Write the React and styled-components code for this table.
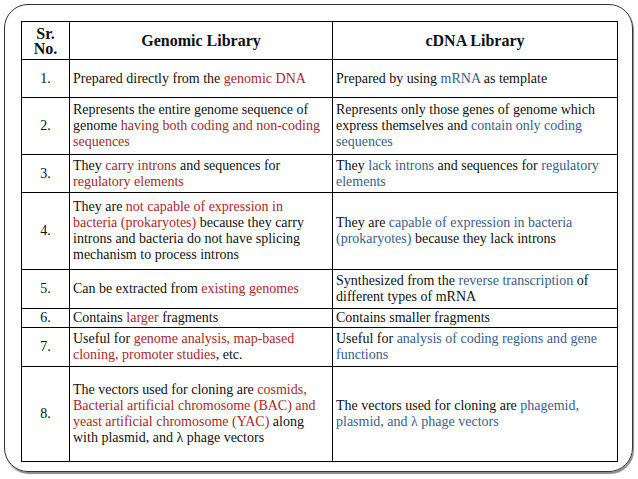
import React from 'react'
import styled, { createGlobalStyle } from 'styled-components'

const serif = `'Liberation Serif', 'Times New Roman', serif`

const GlobalStyle = createGlobalStyle`
  html, body {
    margin: 0;
    padding: 0;
    background: #fff;
    font-family: ${serif};
  }
`

const rows = [
  {
    no: '1.',
    h: 38,
    genomic: <>Prepared directly from the <Red>genomic DNA</Red></>,
    cdna: <>Prepared by using <Blue>mRNA</Blue> as template</>,
  },
  {
    no: '2.',
    h: 57,
    genomic: <>Represents the entire genome sequence of genome <Red>having both coding and non-coding sequences</Red></>,
    cdna: <>Represents only those genes of genome which express themselves and <Blue>contain only coding sequences</Blue></>,
  },
  {
    no: '3.',
    h: 38,
    genomic: <>They <Red>carry introns</Red> and sequences for <Red>regulatory elements</Red></>,
    cdna: <>They <Blue>lack introns</Blue> and sequences for <Blue>regulatory elements</Blue></>,
  },
  {
    no: '4.',
    h: 77,
    genomic: <>They are <Red>not capable of expression in<br />bacteria (prokaryotes)</Red> because they carry<br />introns and bacteria do not have splicing<br />mechanism to process introns</>,
    cdna: <>They are <Blue>capable of expression in bacteria (prokaryotes)</Blue> because they lack introns</>,
  },
  {
    no: '5.',
    h: 39,
    genomic: <>Can be extracted from <Red>existing genomes</Red></>,
    cdna: <>Synthesized from the <Blue>reverse transcription</Blue> of different types of mRNA</>,
  },
  {
    no: '6.',
    h: 19,
    genomic: <>Contains <Red>larger</Red> fragments</>,
    cdna: <>Contains smaller fragments</>,
  },
  {
    no: '7.',
    h: 39,
    genomic: <>Useful for <Red>genome analysis, map-based cloning, promoter studies</Red>, etc.</>,
    cdna: <>Useful for <Blue>analysis of coding regions and gene functions</Blue></>,
  },
  {
    no: '8.',
    h: 95,
    genomic: <>The vectors used for cloning are <Red>cosmids, Bacterial artificial chromosome (BAC) and yeast artificial chromosome (YAC)</Red> along with plasmid, and λ phage vectors</>,
    cdna: <>The vectors used for cloning are <Blue>phagemid, plasmid, and λ phage vectors</Blue></>,
  },
]

function Red({ children }) {
  return <RedText>{children}</RedText>
}

function Blue({ children }) {
  return <BlueText>{children}</BlueText>
}

const App = () => {
  return (
    <>
      <GlobalStyle />
      <Slide>
        <Frame>
          <Table>
            <colgroup>
              <col style={{ width: 48 }} />
              <col style={{ width: 263 }} />
              <col style={{ width: 285 }} />
            </colgroup>
            <thead>
              <tr>
                <HeadCell $h={38}>
                  <SrLabel>Sr.<br />No.</SrLabel>
                </HeadCell>
                <HeadCell $h={38}>Genomic Library</HeadCell>
                <HeadCell $h={38}>cDNA Library</HeadCell>
              </tr>
            </thead>
            <tbody>
              {rows.map((row) => (
                <tr key={row.no}>
                  <NoCell $h={row.h}>{row.no}</NoCell>
                  <TextCell $h={row.h}>{row.genomic}</TextCell>
                  <TextCell $h={row.h}>{row.cdna}</TextCell>
                </tr>
              ))}
            </tbody>
          </Table>
        </Frame>
      </Slide>
    </>
  )
}

const Slide = styled.div`
  width: 638px;
  height: 479px;
  padding: 4px 0 0 4px;
  box-sizing: border-box;
  background: #fff;
  color: #111;
`

const Frame = styled.div`
  width: 629px;
  height: 468px;
  box-sizing: border-box;
  border: 1.5px solid #333;
  border-radius: 24px;
  padding: 16px 15px 0 16px;
  box-shadow: 1px 2px 1px #8a8a8a;
`

const Table = styled.table`
  border-collapse: collapse;
  table-layout: fixed;
  width: 596px;
  border: 1.5px solid #000;
  color: #111;

  td, th {
    border: 1px solid #000;
    box-sizing: border-box;
    font-family: ${serif};
  }
`

const HeadCell = styled.th`
  height: ${(p) => p.$h}px;
  padding: 0;
  font-size: 16px;
  font-weight: 700;
  text-align: center;
  vertical-align: middle;
`

const SrLabel = styled.div`
  line-height: 15px;
`

const NoCell = styled.td`
  height: ${(p) => p.$h}px;
  padding: 0;
  font-size: 14px;
  line-height: 16px;
  text-align: center;
  vertical-align: middle;
`

const TextCell = styled.td`
  height: ${(p) => p.$h}px;
  padding: 0 1px 0 3px;
  font-size: 14px;
  line-height: 16px;
  text-align: left;
  vertical-align: middle;
`

const RedText = styled.span`
  color: #a62a2c;
`

const BlueText = styled.span`
  color: #3a5d8e;
`

export default App
